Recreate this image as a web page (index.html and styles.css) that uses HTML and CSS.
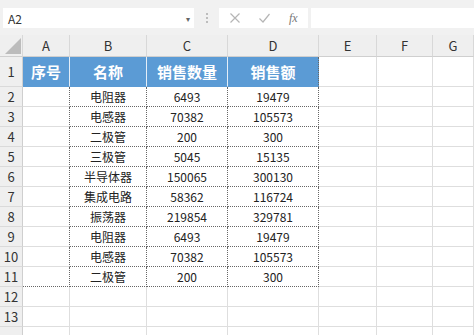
FILE: index.html
```html
<!DOCTYPE html>
<html lang="zh">
<head>
<meta charset="utf-8">
<link rel="stylesheet" href="styles.css">
</head>
<body>
<div class="toolbar">
  <div class="namebox"><span class="ref">A2</span><span class="caret">▾</span></div>
  <div class="grip"><i></i><i></i><i></i></div>
  <div class="fbtns">
    <svg class="ic" width="12" height="12" viewBox="0 0 12 12"><path d="M1.5 1.5 L10.5 10.5 M10.5 1.5 L1.5 10.5" stroke="#b5b5b5" stroke-width="1.2" fill="none"/></svg>
    <svg class="ic" width="13" height="12" viewBox="0 0 13 12"><path d="M1.5 6.5 L5 10 L11.5 2" stroke="#b5b5b5" stroke-width="1.2" fill="none"/></svg>
    <span class="fx">fx</span>
  </div>
  <div class="finput"></div>
</div>
<table class="sheet">
  <colgroup>
    <col class="c-rn"><col class="c-a"><col class="c-b"><col class="c-c"><col class="c-d"><col class="c-e"><col class="c-f"><col class="c-g">
  </colgroup>
  <tr class="hdr">
    <th class="corner"><span class="tri"></span></th><th>A</th><th>B</th><th>C</th><th>D</th><th>E</th><th>F</th><th>G</th>
  </tr>
  <tr class="r1">
    <th class="rn">1</th><td class="blue">序号</td><td class="blue">名称</td><td class="blue">销售数量</td><td class="blue last">销售额</td><td></td><td></td><td></td>
  </tr>
  <tr><th class="rn">2</th><td class="a"></td><td class="d">电阻器</td><td class="d">6493</td><td class="d">19479</td><td></td><td></td><td></td></tr>
  <tr><th class="rn">3</th><td class="a"></td><td class="d">电感器</td><td class="d">70382</td><td class="d">105573</td><td></td><td></td><td></td></tr>
  <tr><th class="rn">4</th><td class="a"></td><td class="d">二极管</td><td class="d">200</td><td class="d">300</td><td></td><td></td><td></td></tr>
  <tr><th class="rn">5</th><td class="a"></td><td class="d">三极管</td><td class="d">5045</td><td class="d">15135</td><td></td><td></td><td></td></tr>
  <tr><th class="rn">6</th><td class="a"></td><td class="d">半导体器</td><td class="d">150065</td><td class="d">300130</td><td></td><td></td><td></td></tr>
  <tr><th class="rn">7</th><td class="a"></td><td class="d">集成电路</td><td class="d">58362</td><td class="d">116724</td><td></td><td></td><td></td></tr>
  <tr><th class="rn">8</th><td class="a"></td><td class="d">振荡器</td><td class="d">219854</td><td class="d">329781</td><td></td><td></td><td></td></tr>
  <tr><th class="rn">9</th><td class="a"></td><td class="d">电阻器</td><td class="d">6493</td><td class="d">19479</td><td></td><td></td><td></td></tr>
  <tr><th class="rn">10</th><td class="a"></td><td class="d">电感器</td><td class="d">70382</td><td class="d">105573</td><td></td><td></td><td></td></tr>
  <tr class="lastrow"><th class="rn">11</th><td class="a"></td><td class="d">二极管</td><td class="d">200</td><td class="d">300</td><td></td><td></td><td></td></tr>
  <tr><th class="rn">12</th><td></td><td></td><td></td><td></td><td></td><td></td><td></td></tr>
  <tr><th class="rn">13</th><td></td><td></td><td></td><td></td><td></td><td></td><td></td></tr>
  <tr><th class="rn"></th><td></td><td></td><td></td><td></td><td></td><td></td><td></td></tr>
</table>
</body>
</html>
```
FILE: styles.css
```css
html, body {
  margin: 0;
  padding: 0;
  width: 474px;
  height: 335px;
  overflow: hidden;
  background: #fff;
  font-family: "Noto Sans CJK SC", "Noto Sans", sans-serif;
  color: #333;
}
.toolbar {
  height: 35px;
  background: #f1f1f1;
  display: flex;
  align-items: flex-start;
  padding-top: 8px;
  box-sizing: border-box;
}
.namebox {
  margin-left: 3px;
  width: 191px;
  height: 20px;
  background: #fff;
  display: flex;
  align-items: center;
  justify-content: space-between;
  box-sizing: border-box;
  padding: 0 4px 0 5px;
  font-size: 12px;
  color: #333;
}
.caret { font-size: 8px; color: #666; }
.grip {
  width: 25px;
  height: 20px;
  display: flex;
  flex-direction: column;
  align-items: center;
  justify-content: center;
  gap: 2px;
}
.grip i {
  display: block;
  width: 2px;
  height: 2px;
  background: #bdbdbd;
}
.fbtns {
  width: 89px;
  height: 20px;
  background: #fff;
  display: flex;
  align-items: center;
  padding-left: 10px;
  box-sizing: border-box;
  gap: 17px;
}
.fx {
  font-family: "Liberation Serif", serif;
  font-style: italic;
  font-size: 12px;
  color: #777;
  margin-left: 1px;
}
.finput {
  margin-left: 3px;
  flex: 1;
  height: 20px;
  background: #fff;
}
.sheet {
  border-collapse: separate;
  border-spacing: 0;
  table-layout: fixed;
  width: 474px;
}
.c-rn { width: 23px; }
.c-a { width: 47px; }
.c-b { width: 77px; }
.c-c { width: 81px; }
.c-d { width: 91px; }
.c-e { width: 58px; }
.c-f { width: 56px; }
.c-g { width: 41px; }
th, td {
  padding: 0;
  box-sizing: border-box;
  border-right: 1px solid #dedede;
  border-bottom: 1px solid #dedede;
  text-align: center;
  white-space: nowrap;
  overflow: hidden;
}
tr { height: 20px; }
.hdr { height: 22px; }
.hdr th {
  background: #efefef;
  font-weight: normal;
  font-size: 13px;
  color: #333;
  border-right: 1px solid #d8d8d8;
  border-bottom: 1px solid #cfcfcf;
}
.corner { position: relative; }
.tri {
  position: absolute;
  right: 1px;
  bottom: 2px;
  width: 0;
  height: 0;
  border-left: 16px solid transparent;
  border-bottom: 16px solid #bcbcbc;
}
.rn {
  background: #efefef;
  font-weight: normal;
  font-size: 13px;
  color: #333;
  border-right: 1px solid #cfcfcf;
  border-bottom: 1px solid #dadada;
}
.r1 { height: 30px; }
.blue {
  background: #5b9bd5;
  color: #fff;
  font-weight: bold;
  font-size: 15px;
  border-right: 1px solid #e4eef8;
  border-bottom: 1px solid #5b9bd5;
}
.blue.last { border-right: 1px dotted #666; }
td.a {
  border-right: 1px dotted #666;
}
td.d {
  font-size: 12px;
  color: #222;
  border-right: 1px dotted #666;
  border-bottom: 1px dotted #666;
}
.lastrow td.a { border-bottom: 1px dotted #666; }
```
